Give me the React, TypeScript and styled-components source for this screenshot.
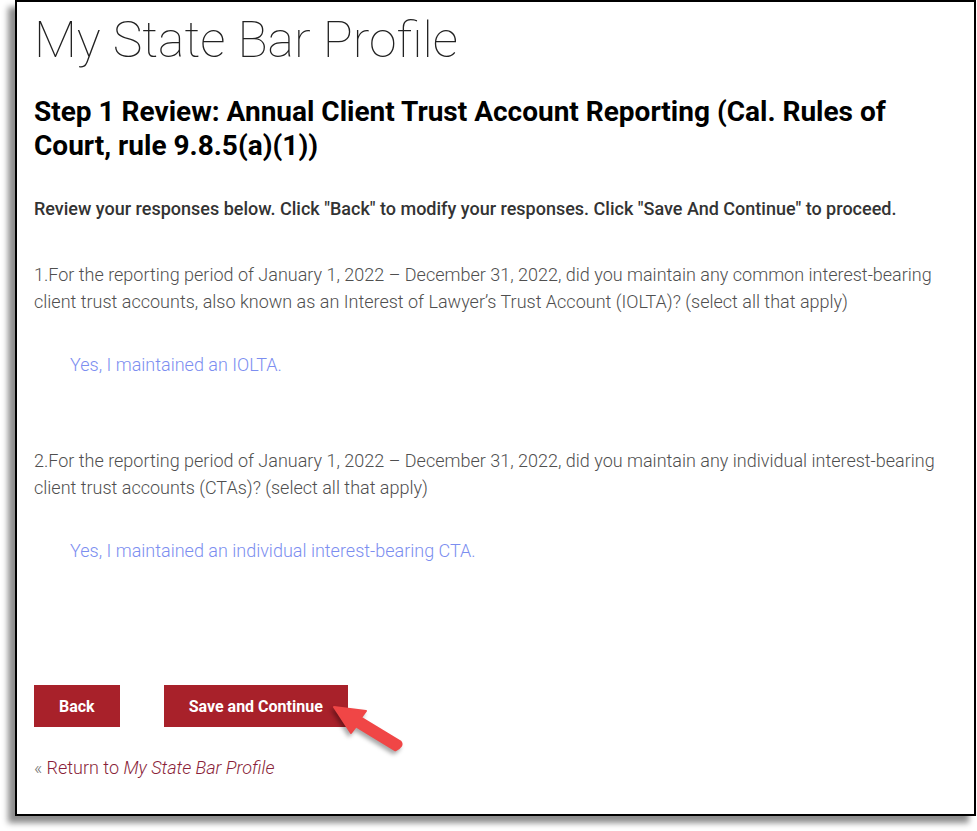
import React from "react";
import styled, { createGlobalStyle } from "styled-components";

const GlobalStyle = createGlobalStyle`
  html, body {
    margin: 0;
    padding: 0;
    background: #ffffff;
  }
  body {
    font-family: Roboto, "Liberation Sans", Arial, sans-serif;
  }
`;

const Page = styled.div`
  padding: 0 1px 0 15px;
  width: 977px;
  height: 831px;
  box-sizing: border-box;
`;

const Frame = styled.div`
  position: relative;
  box-sizing: border-box;
  width: 961px;
  height: 816px;
  border: 2px solid #000;
  background: #fff;
  box-shadow: -7px 7px 6px rgba(0, 0, 0, 0.45);
  padding: 8px 34px 0 17px;
`;

const Title = styled.h1`
  margin: 0;
  font-size: 50px;
  line-height: 60px;
  font-weight: 100;
  color: #222;
`;

const StepHeading = styled.h2`
  margin: 25px 0 0;
  font-size: 28px;
  line-height: 34px;
  font-weight: 700;
  color: #000;
`;

const Intro = styled.p`
  margin: 34px 0 0;
  font-size: 18px;
  line-height: 24px;
  font-weight: 500;
  color: #333;
`;

const Question = styled.p`
  margin: ${(p: { $first?: boolean }) => (p.$first ? "40px" : "69px")} 0 0;
  font-size: 18px;
  line-height: 27px;
  font-weight: 300;
  color: #4f4f4f;
`;

const Answer = styled.p`
  margin: 36px 0 0 36px;
  font-size: 18px;
  line-height: 27px;
  font-weight: 300;
  color: #7c8ef0;
`;

const Actions = styled.div`
  display: flex;
  gap: 44px;
  margin-top: 121px;
`;

const Button = styled.button`
  height: 42px;
  padding: 0 25px;
  border: none;
  background: #a8212a;
  color: #fff;
  font-family: Roboto, "Liberation Sans", Arial, sans-serif;
  font-size: 16px;
  font-weight: 700;
  cursor: pointer;
`;

const ReturnLine = styled.p`
  margin: 27px 0 0;
  font-size: 18px;
  line-height: 27px;
  font-weight: 300;
  color: #8a1f3a;
`;

const Guillemet = styled.span`
  color: #777;
`;

const ProfileName = styled.em`
  font-style: italic;
`;

const Arrow = styled.svg`
  position: absolute;
  left: 314px;
  top: 700px;
  overflow: visible;
  filter: drop-shadow(-2px 3px 2px rgba(0, 0, 0, 0.35));
`;

export default function App() {
  return (
    <>
      <GlobalStyle />
      <Page>
        <Frame>
          <Title>My State Bar Profile</Title>
          <StepHeading>
            Step 1 Review: Annual Client Trust Account Reporting (Cal. Rules of
            Court, rule 9.8.5(a)(1))
          </StepHeading>
          <Intro>
            Review your responses below. Click "Back" to modify your responses.
            Click "Save And Continue" to proceed.
          </Intro>
          <Question $first>
            1.For the reporting period of January 1, 2022 – December 31, 2022,
            did you maintain any common interest-bearing client trust accounts,
            also known as an Interest of Lawyer’s Trust Account (IOLTA)? (select
            all that apply)
          </Question>
          <Answer>Yes, I maintained an IOLTA.</Answer>
          <Question>
            2.For the reporting period of January 1, 2022 – December 31, 2022,
            did you maintain any individual interest-bearing client trust
            accounts (CTAs)? (select all that apply)
          </Question>
          <Answer>Yes, I maintained an individual interest-bearing CTA.</Answer>
          <Actions>
            <Button>Back</Button>
            <Button>Save and Continue</Button>
          </Actions>
          <ReturnLine>
            <Guillemet>«</Guillemet> Return to{" "}
            <ProfileName>My State Bar Profile</ProfileName>
          </ReturnLine>
          <Arrow width="80" height="50" viewBox="0 0 80 50">
            <path
              d="M3 5 L35 9 L30 15.7 L69.6 39.7 Q73 44 64.4 48.3 L25 24.3 L20 31 Z"
              fill="#f04646"
              stroke="#f04646"
              strokeWidth="2"
              strokeLinejoin="round"
            />
          </Arrow>
        </Frame>
      </Page>
    </>
  );
}
